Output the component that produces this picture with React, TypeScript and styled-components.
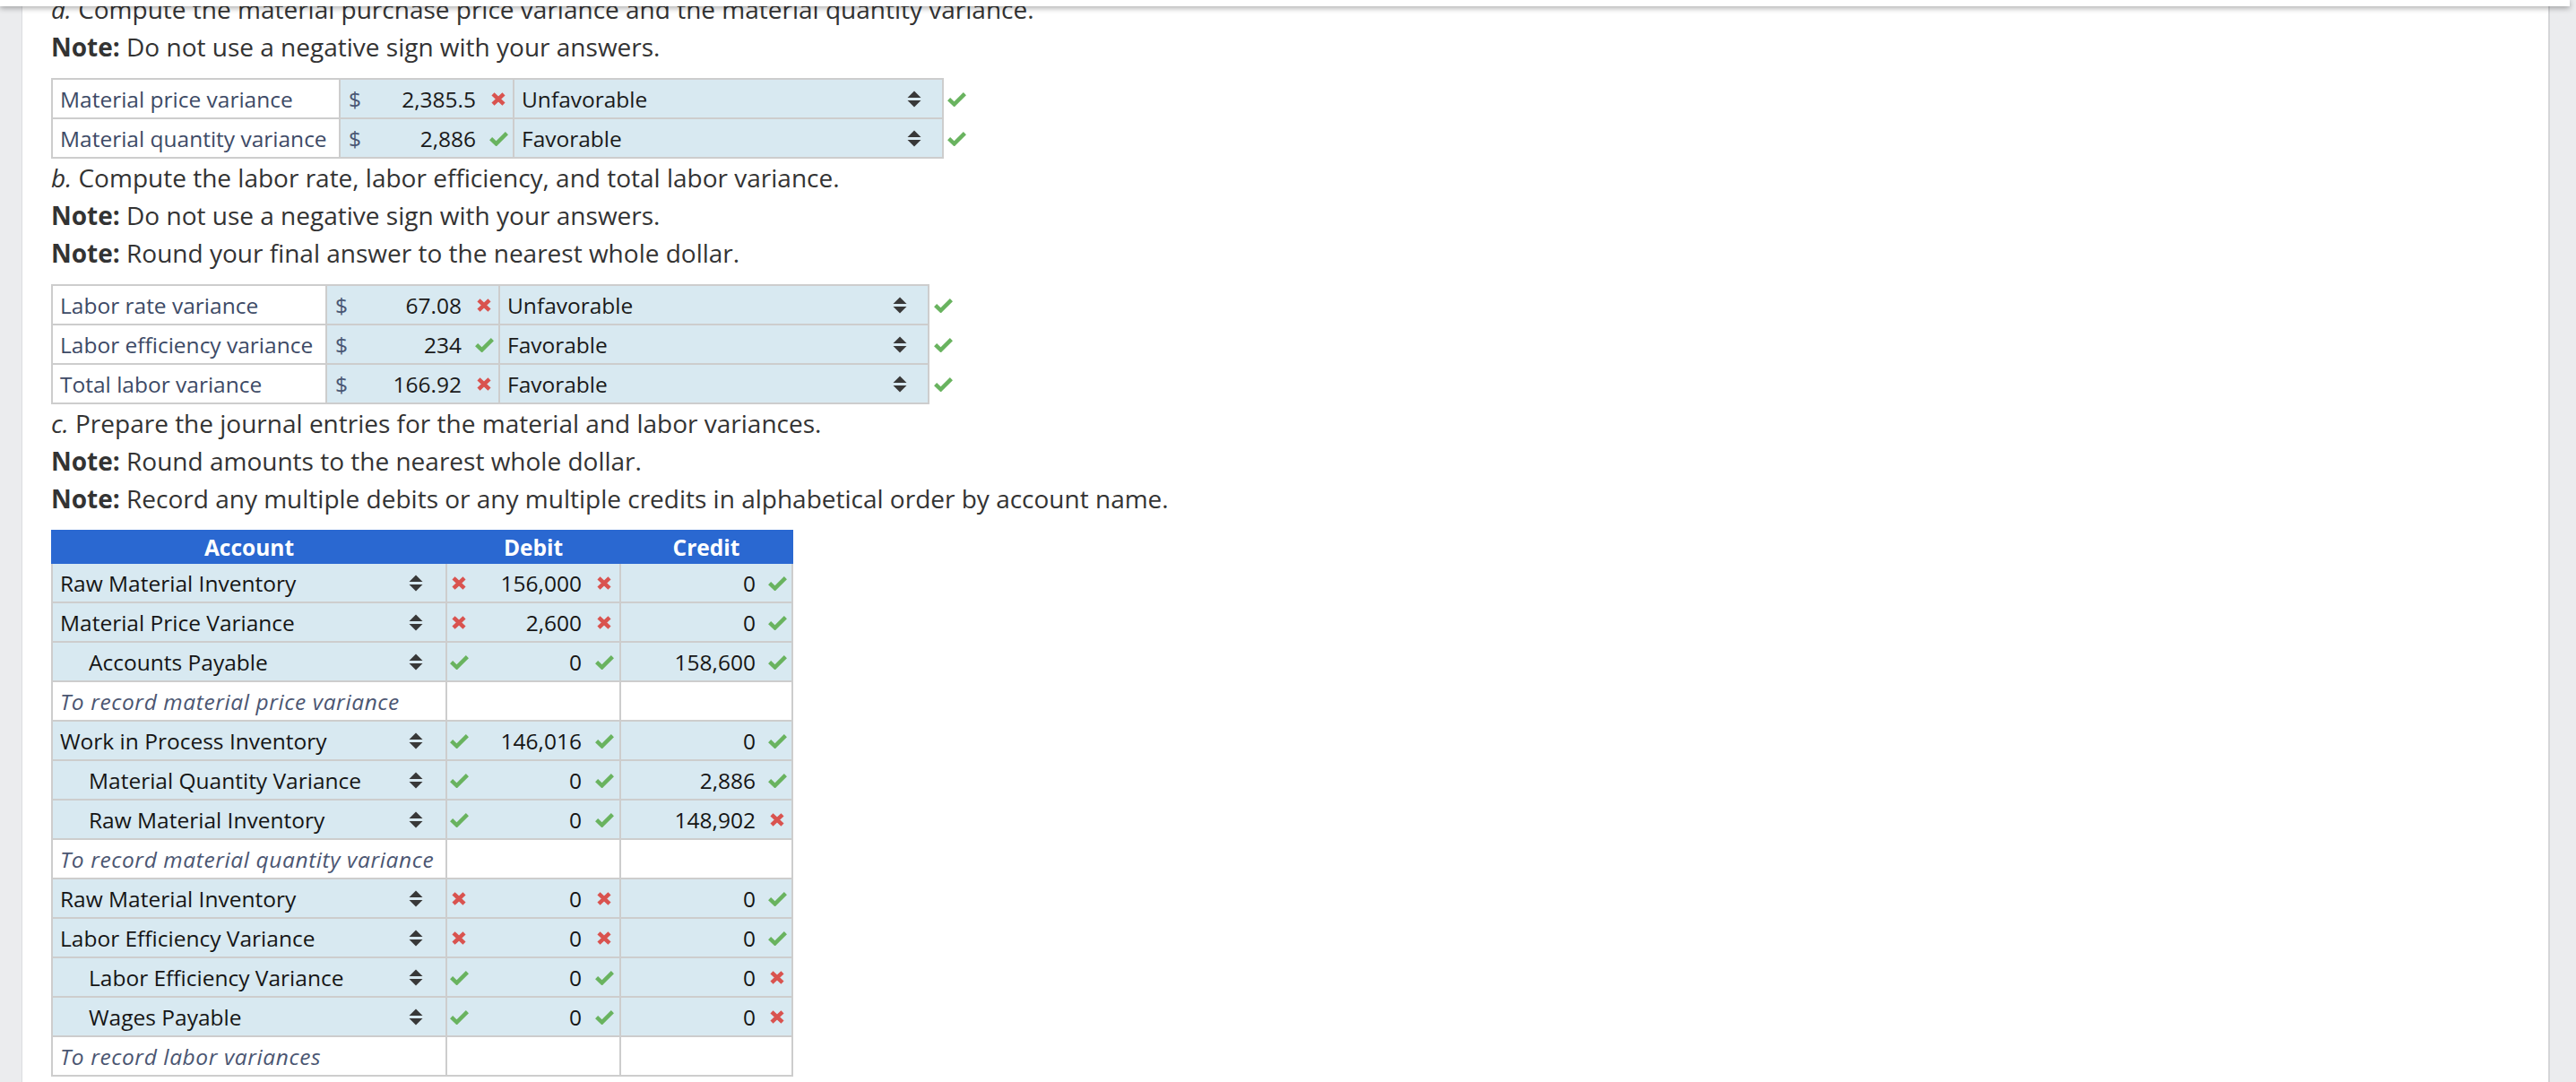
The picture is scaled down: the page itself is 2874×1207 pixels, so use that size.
import React from "react";
import styled, { createGlobalStyle } from "styled-components";

const GlobalStyle = createGlobalStyle`
  html, body {
    margin: 0;
    padding: 0;
    background: #ffffff;
  }
  body {
    font-family: "Open Sans", "Noto Sans", sans-serif;
    overflow: hidden;
  }
`;

const Page = styled.div`
  position: relative;
  display: flex;
  width: 2874px;
  height: 1207px;
  overflow: hidden;
  background: #ffffff;
`;

const TopBar = styled.div`
  position: absolute;
  top: 0;
  left: 0;
  width: 2867px;
  height: 7px;
  background: #ffffff;
  box-shadow: 0 2px 6px rgba(0, 0, 0, 0.35);
  z-index: 2;
`;

const LeftRail = styled.div`
  flex: 0 0 24px;
  background: #ebecee;
  border-right: 1px solid #dcdde0;
`;

const RightRail = styled.div`
  flex: 0 0 29px;
  background: #ebecee;
  border-left: 2px solid #d5d6d8;
`;

const Main = styled.main`
  flex: 1;
  min-width: 0;
  padding-left: 32px;
`;

const Content = styled.div`
  margin-top: -11px;
`;

const Line = styled.p`
  margin: 0;
  font-size: 28px;
  line-height: 42px;
  color: #333333;
  white-space: nowrap;

  strong {
    font-weight: 700;
  }
  em {
    font-style: italic;
  }
`;

/* ---------- answer tables (a, b) ---------- */

const AnswerBlock = styled.div<{ $top: number }>`
  display: flex;
  align-items: flex-start;
  margin-top: ${(p) => p.$top}px;
`;

const AnswerGrid = styled.div<{ $cols: string }>`
  display: grid;
  grid-template-columns: ${(p) => p.$cols};
  grid-auto-rows: 42px;
  gap: 2px;
  padding: 2px;
  background: #cdcdcd;
  font-size: 24.5px;
`;

const LabelCell = styled.div`
  display: flex;
  align-items: center;
  padding-left: 8px;
  background: #ffffff;
  color: #3d4a66;
  white-space: nowrap;
`;

const AmountCell = styled.div`
  display: flex;
  align-items: center;
  padding: 0 4px 0 9px;
  background: #d8e9f1;
  color: #1a1a1a;
`;

const Dollar = styled.span`
  color: #4a5773;
`;

const Value = styled.span`
  flex: 1;
  text-align: right;
  white-space: nowrap;
`;

const MarkBox = styled.span<{ $gap?: number }>`
  flex: 0 0 24px;
  display: flex;
  align-items: center;
  justify-content: center;
  margin-left: ${(p) => p.$gap ?? 0}px;
`;

const SelectCell = styled.div`
  display: flex;
  align-items: center;
  justify-content: space-between;
  padding: 0 23px 0 8px;
  background: #d8e9f1;
  color: #1a1a1a;
`;

const SideMarks = styled.div<{ $gap: number }>`
  display: flex;
  flex-direction: column;
  gap: 2px;
  padding-top: 2px;
  margin-left: ${(p) => p.$gap}px;
`;

const SideMark = styled.div`
  height: 42px;
  display: flex;
  align-items: center;
`;

/* ---------- journal ---------- */

const Journal = styled.div`
  width: 828px;
  margin-top: 14px;
  font-size: 24.5px;
`;

const JOURNAL_COLS = "438px 192px 190px";

const JournalHead = styled.div`
  display: grid;
  grid-template-columns: ${JOURNAL_COLS};
  column-gap: 2px;
  padding: 0 2px;
  height: 38px;
  background: #2a68d1;
  color: #ffffff;
  font-weight: 700;
`;

const HeadCell = styled.div`
  display: flex;
  align-items: center;
  justify-content: center;
`;

const JournalBody = styled.div`
  display: grid;
  grid-template-columns: ${JOURNAL_COLS};
  grid-auto-rows: 42px;
  gap: 2px;
  padding: 0 2px 2px;
  background: #cdcdcd;
`;

const AccountCell = styled.div<{ $indent?: boolean; $memo?: boolean }>`
  display: flex;
  align-items: center;
  justify-content: space-between;
  padding: 0 25px 0 ${(p) => (p.$indent ? 40 : 8)}px;
  background: ${(p) => (p.$memo ? "#ffffff" : "#d8e9f1")};
  color: ${(p) => (p.$memo ? "#4b5672" : "#151515")};
  font-style: ${(p) => (p.$memo ? "italic" : "normal")};
  letter-spacing: ${(p) => (p.$memo ? "0.6px" : "0")};
  white-space: nowrap;
`;

const MoneyCell = styled.div<{ $memo?: boolean; $pad: string }>`
  display: flex;
  align-items: center;
  padding: ${(p) => p.$pad};
  background: ${(p) => (p.$memo ? "#ffffff" : "#d8e9f1")};
  color: #151515;
`;

/* ---------- icons ---------- */

const Check = () => (
  <svg width="21" height="17" viewBox="0 0 21 17">
    <path d="M1.6 8.6 L7.6 14.4 L19.4 2.6" fill="none" stroke="#69b35f" strokeWidth="4.4" />
  </svg>
);

const Cross = () => (
  <svg width="16" height="15" viewBox="0 0 16 15">
    <path d="M2 1.8 L14 13.2 M14 1.8 L2 13.2" fill="none" stroke="#d9534f" strokeWidth="4.5" />
  </svg>
);

const Mark = ({ ok }: { ok: boolean }) => (ok ? <Check /> : <Cross />);

const SortArrows = () => (
  <svg width="16" height="19" viewBox="0 0 16 19">
    <path d="M8 0.5 L15.5 8 L0.5 8 Z" fill="#383838" />
    <path d="M0.5 11 L15.5 11 L8 18.5 Z" fill="#383838" />
  </svg>
);

/* ---------- data ---------- */

type Answer = { label: string; amount: string; amountOk: boolean; choice: string };

const materialAnswers: Answer[] = [
  { label: "Material price variance", amount: "2,385.5", amountOk: false, choice: "Unfavorable" },
  { label: "Material quantity variance", amount: "2,886", amountOk: true, choice: "Favorable" },
];

const laborAnswers: Answer[] = [
  { label: "Labor rate variance", amount: "67.08", amountOk: false, choice: "Unfavorable" },
  { label: "Labor efficiency variance", amount: "234", amountOk: true, choice: "Favorable" },
  { label: "Total labor variance", amount: "166.92", amountOk: false, choice: "Favorable" },
];

type Entry =
  | {
      memo?: false;
      account: string;
      indent?: boolean;
      accountOk: boolean;
      debit: string;
      debitOk: boolean;
      credit: string;
      creditOk: boolean;
    }
  | { memo: true; account: string };

const entries: Entry[] = [
  { account: "Raw Material Inventory", accountOk: false, debit: "156,000", debitOk: false, credit: "0", creditOk: true },
  { account: "Material Price Variance", accountOk: false, debit: "2,600", debitOk: false, credit: "0", creditOk: true },
  { account: "Accounts Payable", indent: true, accountOk: true, debit: "0", debitOk: true, credit: "158,600", creditOk: true },
  { memo: true, account: "To record material price variance" },
  { account: "Work in Process Inventory", accountOk: true, debit: "146,016", debitOk: true, credit: "0", creditOk: true },
  { account: "Material Quantity Variance", indent: true, accountOk: true, debit: "0", debitOk: true, credit: "2,886", creditOk: true },
  { account: "Raw Material Inventory", indent: true, accountOk: true, debit: "0", debitOk: true, credit: "148,902", creditOk: false },
  { memo: true, account: "To record material quantity variance" },
  { account: "Raw Material Inventory", accountOk: false, debit: "0", debitOk: false, credit: "0", creditOk: true },
  { account: "Labor Efficiency Variance", accountOk: false, debit: "0", debitOk: false, credit: "0", creditOk: true },
  { account: "Labor Efficiency Variance", indent: true, accountOk: true, debit: "0", debitOk: true, credit: "0", creditOk: false },
  { account: "Wages Payable", indent: true, accountOk: true, debit: "0", debitOk: true, credit: "0", creditOk: false },
  { memo: true, account: "To record labor variances" },
];

/* ---------- components ---------- */

const AnswerTable = ({ rows, cols, top, sideGap }: { rows: Answer[]; cols: string; top: number; sideGap: number }) => (
  <AnswerBlock $top={top}>
    <AnswerGrid $cols={cols}>
      {rows.map((r) => (
        <React.Fragment key={r.label}>
          <LabelCell>{r.label}</LabelCell>
          <AmountCell>
            <Dollar>$</Dollar>
            <Value>{r.amount}</Value>
            <MarkBox $gap={13}>
              <Mark ok={r.amountOk} />
            </MarkBox>
          </AmountCell>
          <SelectCell>
            <span>{r.choice}</span>
            <SortArrows />
          </SelectCell>
        </React.Fragment>
      ))}
    </AnswerGrid>
    <SideMarks $gap={sideGap}>
      {rows.map((r) => (
        <SideMark key={r.label}>
          <Check />
        </SideMark>
      ))}
    </SideMarks>
  </AnswerBlock>
);

export default function App() {
  return (
    <>
      <GlobalStyle />
      <Page>
        <TopBar />
        <LeftRail />
        <Main>
          <Content>
            <Line>
              <em>a.</em> Compute the material purchase price variance and the material quantity variance.
            </Line>
            <Line>
              <strong>Note:</strong> Do not use a negative sign with your answers.
            </Line>
            <AnswerTable rows={materialAnswers} cols="319px 192px 477px" top={14} sideGap={4} />

            <Line>
              <em>b.</em> Compute the labor rate, labor efficiency, and total labor variance.
            </Line>
            <Line>
              <strong>Note:</strong> Do not use a negative sign with your answers.
            </Line>
            <Line>
              <strong>Note:</strong> Round your final answer to the nearest whole dollar.
            </Line>
            <AnswerTable rows={laborAnswers} cols="304px 191px 477px" top={14} sideGap={5} />

            <Line>
              <em>c.</em> Prepare the journal entries for the material and labor variances.
            </Line>
            <Line>
              <strong>Note:</strong> Round amounts to the nearest whole dollar.
            </Line>
            <Line>
              <strong>Note:</strong> Record any multiple debits or any multiple credits in alphabetical order by account name.
            </Line>

            <Journal>
              <JournalHead>
                <HeadCell>Account</HeadCell>
                <HeadCell>Debit</HeadCell>
                <HeadCell>Credit</HeadCell>
              </JournalHead>
              <JournalBody>
                {entries.map((e, i) =>
                  e.memo ? (
                    <React.Fragment key={i}>
                      <AccountCell $memo>{e.account}</AccountCell>
                      <MoneyCell $memo $pad="0" />
                      <MoneyCell $memo $pad="0" />
                    </React.Fragment>
                  ) : (
                    <React.Fragment key={i}>
                      <AccountCell $indent={e.indent}>
                        <span>{e.account}</span>
                        <SortArrows />
                      </AccountCell>
                      <MoneyCell $pad="0 5px 0 1px">
                        <MarkBox>
                          <Mark ok={e.accountOk} />
                        </MarkBox>
                        <Value>{e.debit}</Value>
                        <MarkBox $gap={13}>
                          <Mark ok={e.debitOk} />
                        </MarkBox>
                      </MoneyCell>
                      <MoneyCell $pad="0 4px 0 0">
                        <Value>{e.credit}</Value>
                        <MarkBox $gap={12}>
                          <Mark ok={e.creditOk} />
                        </MarkBox>
                      </MoneyCell>
                    </React.Fragment>
                  )
                )}
              </JournalBody>
            </Journal>
          </Content>
        </Main>
        <RightRail />
      </Page>
    </>
  );
}
